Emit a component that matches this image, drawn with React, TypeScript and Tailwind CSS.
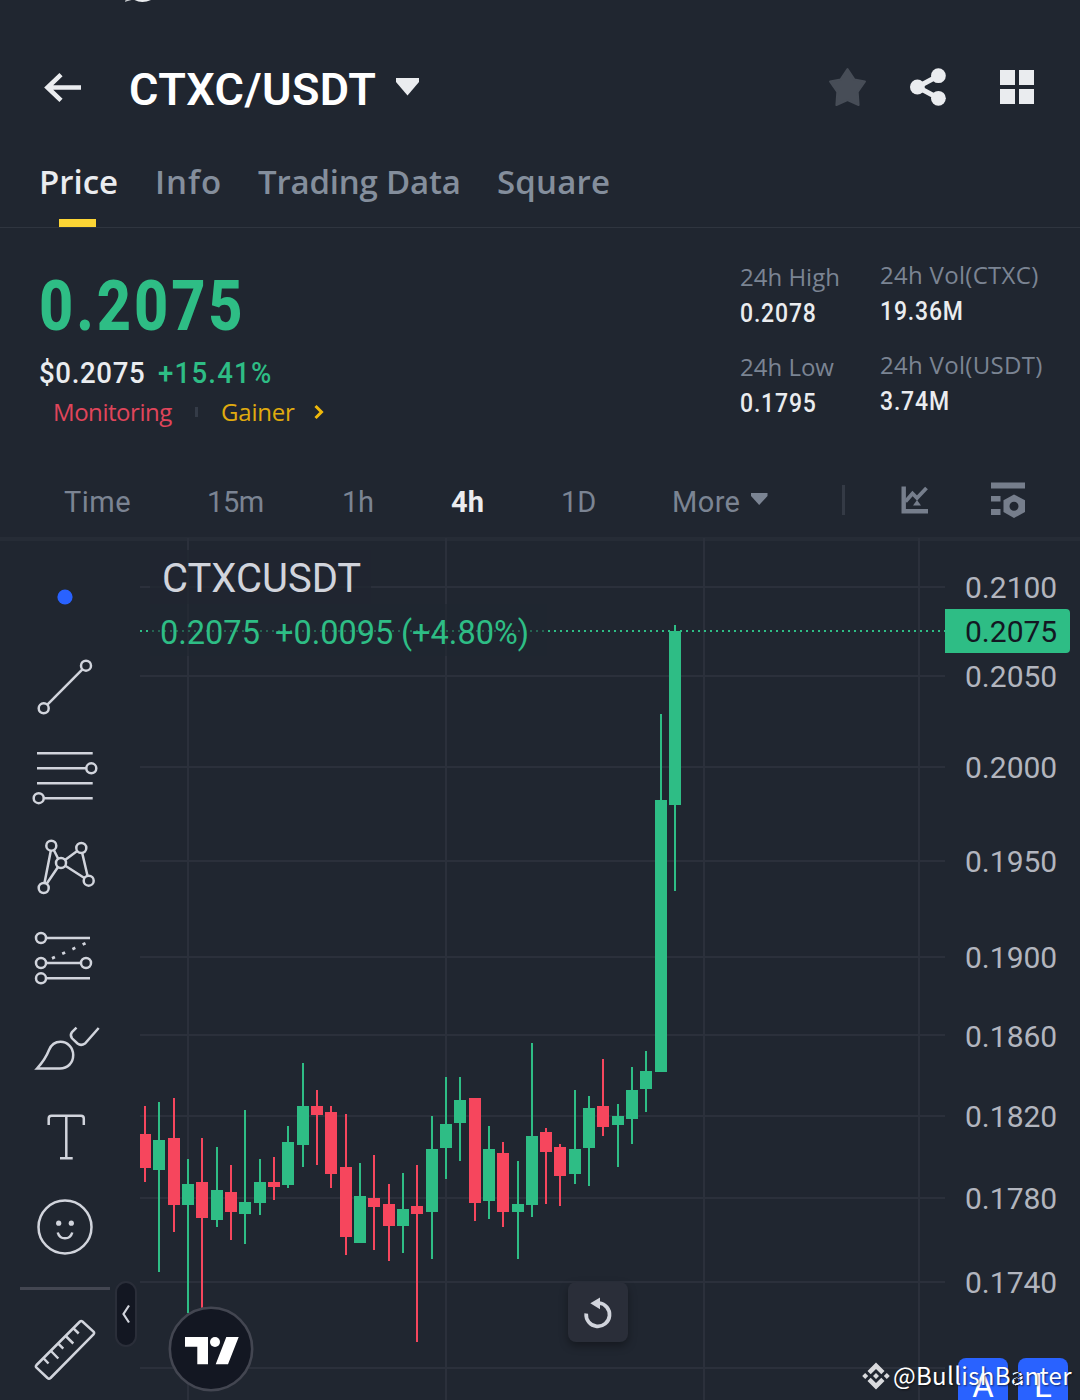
import type { ReactNode } from "react";

const tabs = [
  { label: "Price", className: "w-[116px] text-[#eaecef]" },
  { label: "Info", className: "w-[103px] tracking-[1px] text-[#848e9c]" },
  { label: "Trading Data", className: "w-[239px] tracking-[-0.2px] text-[#848e9c]" },
  { label: "Square", className: "tracking-[0.2px] text-[#848e9c]" },
];

const intervals = [
  { label: "Time", className: "w-[143px] tracking-[0.5px]" },
  { label: "15m", className: "w-[135px] tracking-[-0.4px]" },
  { label: "1h", className: "w-[109px] tracking-[-0.4px]" },
  { label: "4h", className: "w-[110px] font-bold text-[#eaecef]" },
  { label: "1D", className: "w-[111px]" },
  { label: "More", className: "w-[79px] tracking-[0.4px]" },
];

const priceStats = [
  { label: "24h High", value: "0.2078" },
  { label: "24h Low", value: "0.1795" },
];

const volumeStats = [
  { label: "24h Vol(CTXC)", value: "19.36M" },
  { label: "24h Vol(USDT)", value: "3.74M" },
];

const gridRows = [587, 676, 767, 861, 957, 1035, 1116, 1198, 1282, 1368];
const gridCols = [188, 446, 704, 919];

const axisLabels = [
  { y: 587, text: "0.2100" },
  { y: 676, text: "0.2050" },
  { y: 767, text: "0.2000" },
  { y: 861, text: "0.1950" },
  { y: 957, text: "0.1900" },
  { y: 1036, text: "0.1860" },
  { y: 1116, text: "0.1820" },
  { y: 1198, text: "0.1780" },
  { y: 1282, text: "0.1740" },
];

// x centre, wick top, body top, body bottom, wick bottom, 1 = up / 0 = down
const candles = [
  [145, 1106, 1134, 1168, 1182, 0],
  [159, 1102, 1140, 1170, 1272, 1],
  [174, 1098, 1138, 1205, 1232, 0],
  [188, 1159, 1184, 1205, 1313, 1],
  [202, 1138, 1182, 1218, 1330, 0],
  [217, 1147, 1190, 1220, 1227, 1],
  [231, 1165, 1192, 1212, 1240, 0],
  [245, 1110, 1202, 1214, 1244, 1],
  [260, 1159, 1182, 1203, 1215, 1],
  [274, 1157, 1182, 1187, 1200, 0],
  [288, 1126, 1142, 1185, 1188, 1],
  [303, 1063, 1106, 1145, 1167, 1],
  [317, 1090, 1106, 1115, 1165, 0],
  [331, 1106, 1112, 1174, 1188, 0],
  [346, 1114, 1167, 1237, 1255, 0],
  [360, 1163, 1196, 1243, 1243, 1],
  [374, 1155, 1198, 1207, 1250, 0],
  [389, 1184, 1204, 1226, 1261, 0],
  [403, 1173, 1209, 1226, 1253, 1],
  [417, 1165, 1206, 1214, 1342, 0],
  [432, 1116, 1149, 1212, 1259, 1],
  [446, 1077, 1124, 1148, 1179, 1],
  [460, 1077, 1100, 1123, 1161, 1],
  [475, 1098, 1098, 1203, 1221, 0],
  [489, 1126, 1149, 1201, 1219, 1],
  [503, 1142, 1153, 1212, 1227, 0],
  [518, 1161, 1204, 1212, 1259, 1],
  [532, 1043, 1136, 1205, 1217, 1],
  [546, 1128, 1132, 1152, 1204, 0],
  [560, 1144, 1147, 1176, 1206, 0],
  [575, 1090, 1149, 1174, 1184, 1],
  [589, 1096, 1108, 1148, 1186, 1],
  [603, 1059, 1106, 1127, 1136, 0],
  [618, 1104, 1116, 1125, 1167, 1],
  [632, 1067, 1090, 1119, 1144, 1],
  [646, 1051, 1071, 1089, 1112, 1],
  [661, 714, 800, 1072, 1072, 1],
  [675, 625, 631, 805, 891, 1],
];

function Tool({ children }: { children: ReactNode }) {
  return (
    <button className="block size-[90px] shrink-0">
      <svg viewBox="0 0 90 90" className="size-full" fill="none" stroke="#d1d4dc" strokeWidth="2.5">
        {children}
      </svg>
    </button>
  );
}

function Header() {
  return (
    <header className="relative flex h-[160px] items-center pt-[15px] pl-11">
      {/* status bar remainder */}
      <svg className="absolute top-0 left-[124px]" width="30" height="3" viewBox="0 0 30 3">
        <path d="M1.5 0.2 L1 1.8 L7.5 0 Z M10.5 0 Q18 4.2 27 0 Z" fill="#eaecef" />
      </svg>
      <svg width="38" height="30" viewBox="0 0 38 30" fill="none" stroke="#eaecef" strokeWidth="4.6">
        <path d="M37 14.5H4M17 1.7 L3.5 14.5 L17 27.3" />
      </svg>
      <h1 className="mt-[4px] ml-[47px] w-[267px] text-[45px] font-semibold tracking-[0.4px] text-white">
        CTXC/USDT
      </h1>
      <svg width="24" height="18" viewBox="0 0 24 18" className="-mt-[2px]">
        <path d="M0 0H23V4L11.5 17.5L0 4Z" fill="#eaecef" />
      </svg>
      <div className="-mt-[2px] ml-[408px] flex items-center">
        <svg width="40" height="40" viewBox="0 0 40 40" className="mt-[1px]">
          <path
            d="M19.5 2 L26.3 12.4 L37 14.5 L29.7 25 L30.6 38 L19.5 33 L8.4 38 L9.3 25 L2 14.5 L12.7 12.4 Z"
            fill="#474d57"
            stroke="#474d57"
            strokeWidth="2"
            strokeLinejoin="round"
          />
        </svg>
        <svg width="38" height="40" viewBox="0 0 38 40" className="ml-[41px]" fill="#eaecef">
          <path d="M29.5 8.7 L8.5 20 L29.5 31.3" fill="none" stroke="#eaecef" strokeWidth="5" />
          <circle cx="29.4" cy="8.7" r="7.4" />
          <circle cx="29.4" cy="31.3" r="7.4" />
          <circle cx="8.4" cy="20" r="7.4" />
        </svg>
        <div className="ml-[53px] grid grid-cols-2 gap-1">
          <span className="size-[15px] bg-[#eaecef]" />
          <span className="size-[15px] bg-[#eaecef]" />
          <span className="size-[15px] bg-[#eaecef]" />
          <span className="size-[15px] bg-[#eaecef]" />
        </div>
      </div>
    </header>
  );
}

function Stat({ label, value }: { label: string; value: string }) {
  return (
    <div className="h-[90px] whitespace-nowrap">
      <div className="h-[35px] font-['Open_Sans',sans-serif] text-[24px] leading-[33px] text-[#7b8493]">{label}</div>
      <div className="origin-left scale-x-[0.92] text-[25px] leading-[37px] font-medium tracking-[0.9px] text-[#eaecef]">
        {value}
      </div>
    </div>
  );
}

function Ticker() {
  return (
    <section className="flex h-[236px] pl-[39px]">
      <div className="w-[701px] pt-[43px]">
        <div className="h-[70px] origin-left scale-x-[0.85] text-[70px] leading-[70px] font-extrabold tracking-[3.4px] text-[#2ebd85]">
          0.2075
        </div>
        <div className="mt-[12px] flex h-[38px] items-center text-[30px] font-medium">
          <span className="w-[119px] origin-left scale-x-[0.92] tracking-[0.7px] text-[#eaecef]">$0.2075</span>
          <span className="origin-left scale-x-[0.92] tracking-[1.3px] text-[#2ebd85]">+15.41%</span>
        </div>
        <div className="mt-[3px] flex h-9 items-center pl-[14px] font-['Open_Sans',sans-serif] text-[24px]">
          <span className="w-[142px] tracking-[-0.45px] text-[#e0455b]">Monitoring</span>
          <span className="h-[10px] w-[3px] bg-[#343b47]" />
          <span className="ml-[23px] w-[93px] tracking-[-0.2px] text-[#e0ab0f]">Gainer</span>
          <svg width="10" height="16" viewBox="0 0 10 16" fill="none" stroke="#f0b90b" strokeWidth="3">
            <path d="M1.5 2L7.5 8L1.5 14" />
          </svg>
        </div>
      </div>
      <div className="w-[140px] pt-8">
        {priceStats.map((s) => (
          <Stat key={s.label} {...s} />
        ))}
      </div>
      <div className="pt-[30px] tracking-[0.3px]">
        {volumeStats.map((s) => (
          <Stat key={s.label} {...s} />
        ))}
      </div>
    </section>
  );
}

function IntervalBar() {
  return (
    <div className="flex h-[77px] items-center border-b-4 border-[#262c36] pl-[64px] text-[29px] text-[#7b8493]">
      {intervals.map(({ label, className }) => (
        <span key={label} className={`mt-[4px] ${className}`}>
          {label}
        </span>
      ))}
      <svg width="17" height="12" viewBox="0 0 17 12" className="-mt-1">
        <path d="M0 0H16.5V3L8.2 12L0 3Z" fill="#7b8493" />
      </svg>
      <span className="-mt-[2px] ml-[74px] h-[30px] w-[3px] bg-[#343a45]" />
      <svg
        width="28"
        height="28"
        viewBox="0 0 28 28"
        className="-mt-[2px] ml-[56px]"
        fill="none"
        stroke="#767e8c"
        strokeWidth="4.4"
      >
        <path d="M2.7 0.5V25.2H27" />
        <path d="M4.5 15.5L11.5 7.5L16 12L25.5 2" strokeWidth="3.8" />
        <path d="M12 19.5L16 14L20 19.5Z" fill="#767e8c" stroke="none" />
      </svg>
      <svg width="36" height="36" viewBox="0 0 36 36" className="-mt-[2px] ml-[61px]" fill="#767e8c">
        <path d="M1 0.5H35V6.5H1Z M1 14H10.5V19.5H1Z M1 27H10.5V33H1Z" />
        <path fillRule="evenodd" d="M24 12.5L35 18.3V30L24 36L13.5 30V18.3Z M24 19.7A4.5 4.5 0 1 0 24 28.7A4.5 4.5 0 1 0 24 19.7Z" />
      </svg>
    </div>
  );
}

function DrawingToolbar() {
  return (
    <aside className="relative flex w-[140px] shrink-0 flex-col pt-[11px] pl-5">
      <Tool>
        <circle cx="45" cy="45" r="7.6" fill="#2962ff" stroke="none" />
      </Tool>
      <Tool>
        <path d="M27.4 62.6L62.4 27.4" />
        <circle cx="23.7" cy="66.3" r="5" />
        <circle cx="66" cy="23.7" r="5" />
      </Tool>
      <Tool>
        <path d="M17 21.2H72.7M17 36.3H66M17 51.3H72.7M24 66.2H72.7" />
        <circle cx="71.3" cy="36.3" r="5" />
        <circle cx="18.7" cy="66.2" r="5" />
      </Tool>
      <Tool>
        <path d="M30.8 28.7L24.5 61M33.8 28L38.2 36.8M45 38L57.2 29M45.3 43.7L64.4 56M62.2 31L67.5 53.7M38 45L26.5 62" />
        <circle cx="31.3" cy="23.7" r="5" />
        <circle cx="61.3" cy="26" r="5" />
        <circle cx="41" cy="41" r="5" />
        <circle cx="23.7" cy="66" r="5" />
        <circle cx="68.7" cy="58.7" r="5" />
      </Tool>
      <Tool>
        <path d="M26 26H70M26 51H61M26 66.3H70" />
        <circle cx="21" cy="26" r="5" />
        <circle cx="21" cy="51" r="5" />
        <circle cx="66" cy="51" r="5" />
        <circle cx="21" cy="66.3" r="5" />
        <path d="M32 46.4L66 31" strokeWidth="2.8" strokeDasharray="3.2 8" />
      </Tool>
      <Tool>
        <path d="M17 66.5H40C47.5 66.5 53.2 61 53.2 53C53.2 45.5 47.5 39.7 40.5 39.7C34 39.7 31 43 29 48C26.5 54.5 22.5 60.5 17 66.5Z" />
        <path d="M56.5 25.7L52 30Q49.7 33 52 36.3L57.5 41.5Q61 44.3 65 41.5L78.7 26" />
      </Tool>
      <Tool>
        <path d="M28.7 33V26.5Q28.7 23.7 31.5 23.7H61Q63.8 23.7 63.8 26.5V33M46.3 23.7V66.3M40 66.3H52.7" />
      </Tool>
      <Tool>
        <circle cx="45" cy="45" r="26.5" />
        <circle cx="38.7" cy="41.2" r="2.6" fill="#d1d4dc" stroke="none" />
        <circle cx="51.3" cy="41.2" r="2.6" fill="#d1d4dc" stroke="none" />
        <path d="M37.7 50.5C40 58.3 50 58.3 52.3 50.5" />
      </Tool>
      <div className="mt-[15px] mb-[15px] h-[3px] w-[90px] shrink-0 bg-[#434651]" />
      <Tool>
        <path
          d="M60 16.5Q61.2 15.5 62.4 16.5L73.5 26.7Q74.7 28 73.5 29.3L30.5 73Q29 74.3 27.5 73L16.5 62.6Q15.3 61.3 16.5 60Z"
          strokeLinejoin="round"
        />
        <path d="M23.8 53.5L28.5 58.5M31 46L38.3 53.5M38.3 38.7L43.3 43.7M45.7 31L53.3 38.5M53.5 23.3L58.7 28.5" />
      </Tool>
      <button className="absolute top-[740px] left-[115px] flex h-[66px] w-[22px] items-center justify-center rounded-[11px] border-2 border-[#2a2e39] bg-[#131722]">
        <svg width="8" height="20" viewBox="0 0 8 20" fill="none" stroke="#d1d4dc" strokeWidth="2.2">
          <path d="M7 1.5L1.5 10L7 18.5" />
        </svg>
      </button>
    </aside>
  );
}

function PriceChart() {
  return (
    <svg width="940" height="859" viewBox="140 541 940 859" className="block overflow-visible">
      <clipPath id="plot">
        <rect x="140" y="541" width="805" height="859" />
      </clipPath>
      <g fill="#2b303b">
        {gridRows.map((y) => (
          <rect key={y} x="140" y={y - 1} width="805" height="2" />
        ))}
        {gridCols.map((x) => (
          <rect key={x} x={x - 1} y="538" width="2" height="862" />
        ))}
      </g>
      <path d="M140 631H945" stroke="#2ebd85" strokeWidth="2" strokeDasharray="2 4" />
      <g clipPath="url(#plot)" shapeRendering="crispEdges">
        {candles.map(([x, high, top, bottom, low, up]) => (
          <g key={x} fill={up ? "#2ebd85" : "#f6465d"}>
            <rect x={x - 1} y={high} width="2" height={low - high} />
            <rect x={x - 6} y={top} width="12" height={bottom - top} />
          </g>
        ))}
      </g>
      <g fontSize="30" fill="#b2b5be">
        {axisLabels.map(({ y, text }) => (
          <text key={text} x="965" y={y + 11}>
            {text}
          </text>
        ))}
      </g>
      <path d="M945 609H1066Q1070 609 1070 613V649Q1070 653 1066 653H945Z" fill="#2ebd85" />
      <text x="965" y="642" fontSize="30" fill="#131722">
        0.2075
      </text>
    </svg>
  );
}

function ChartArea() {
  return (
    <main className="flex h-[859px]">
      <DrawingToolbar />
      <div className="relative">
        <PriceChart />
        <div className="absolute top-[9px] left-[10px] flex flex-col items-start whitespace-nowrap">
          <div className="h-[54px] w-[221px] bg-[#202630]/75 pl-3 text-[40px] leading-[58px] text-[#d1d4dc]">
            CTXCUSDT
          </div>
          <div className="flex h-[52px] w-[397px] bg-[#202630]/60 pl-[10px] text-[32.5px] leading-[58px] text-[#2ebd85]">
            <span className="w-[115px]">0.2075</span>
            <span className="w-[126px]">+0.0095</span>
            <span>(+4.80%)</span>
          </div>
        </div>
        {/* TradingView mark */}
        <svg className="absolute top-[765px] left-[28px]" width="86" height="86" viewBox="168 1306 86 86">
          <circle cx="211" cy="1349" r="41.2" fill="#131722" stroke="#434651" strokeWidth="2.6" />
          <path d="M185 1337H208V1364.3H197.3V1346.7H185Z M226.3 1337H238.7L228 1364.3H215.7Z" fill="#fff" />
          <circle cx="215" cy="1342" r="5" fill="#fff" />
        </svg>
        <button className="absolute top-[741px] left-[428px] flex size-[60px] items-center justify-center rounded-lg bg-[#2a2e39] shadow-[0_4px_8px_rgba(0,0,0,0.35)]">
          <svg width="30" height="34" viewBox="583 1295 30 34">
            <path d="M586.2 1313.5A11.7 11.7 0 1 0 599 1303" fill="none" stroke="#d1d4dc" strokeWidth="3.7" />
            <path d="M590.3 1303.3L600 1297.5V1309.3Z" fill="#d1d4dc" />
          </svg>
        </button>
        <div className="absolute top-[817px] left-[818px] flex h-[42px] gap-[10px] text-center text-[33px] leading-[55px] text-white">
          <span className="h-[50px] w-[50px] rounded-lg bg-[#2962ff]">A</span>
          <span className="h-[50px] w-[50px] rounded-lg bg-[#2962ff]">L</span>
        </div>
        <div className="absolute top-[817px] left-[722px] flex h-9 items-center whitespace-nowrap">
          <svg width="28" height="28" viewBox="0 0 28 28" fill="#d9dadd">
            <path d="M14 0.5L22.5 9L19.3 12.2L14 6.9L8.7 12.2L5.5 9Z M14 27.5L22.5 19L19.3 15.8L14 21.1L8.7 15.8L5.5 19Z M14 11L17 14L14 17L11 14Z M3.2 11L6.2 14L3.2 17L0.2 14Z M24.8 11L27.8 14L24.8 17L21.8 14Z" />
          </svg>
          <span className="-mt-[2px] ml-[3px] font-['Noto_Sans_CJK_SC',sans-serif] text-[24px] tracking-[0.32px] text-white [text-shadow:1px_1px_2px_rgba(0,0,0,0.6)]">
            @BullishBanter
          </span>
          {/* scale handle hatching, sits between the two toggles */}
          <svg className="absolute top-[12px] left-[150px]" width="13" height="17" viewBox="0 0 13 17" fill="none">
            <path d="M2 5L9 2M2 10L11 5M2 14L11 9" stroke="#202630" strokeWidth="1.1" />
            <path d="M3 15L11 12" stroke="#fff" strokeWidth="1.1" />
          </svg>
        </div>
      </div>
    </main>
  );
}

export default function App() {
  return (
    <div className="h-[1400px] w-[1080px] overflow-hidden bg-[#202630] font-['Roboto',sans-serif]">
      <Header />
      <nav className="relative flex h-[68px] border-b border-[#2f353f] pl-[39px] font-['Open_Sans',sans-serif] text-[33px] leading-[43px] font-semibold">
        {tabs.map(({ label, className }) => (
          <span key={label} className={className}>
            {label}
          </span>
        ))}
        <span className="absolute bottom-0 left-[59px] h-2 w-[37px] bg-[#fcd535]" />
      </nav>
      <Ticker />
      <IntervalBar />
      <ChartArea />
    </div>
  );
}
